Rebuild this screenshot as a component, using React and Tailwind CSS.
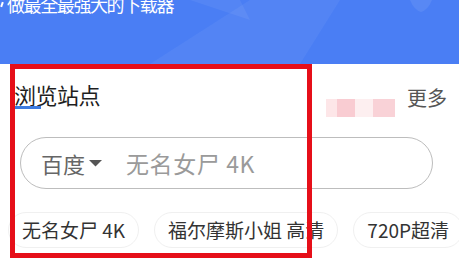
export default function App() {
  const font = { fontFamily: '"Noto Sans CJK SC", "Noto Sans", sans-serif' };
  return (
    <div className="relative w-[459px] h-[270px] overflow-hidden bg-white" style={font}>
      {/* header */}
      <div className="relative h-[64px] bg-[#4a7ef4] overflow-hidden">
        <svg className="absolute inset-0" width="459" height="64" viewBox="0 0 459 64">
          <polygon points="150,64 250,0 340,0 300,64" fill="#ffffff" opacity="0.05" />
          <polygon points="190,0 240,0 250,20" fill="#ffffff" opacity="0.06" />
          <path d="M410,0 L432,0 Q428,10 421,12 Q414,10 410,0 Z" fill="#ffffff" opacity="0.08" />
        </svg>
        <div className="absolute left-[1px] top-[2px] w-[2px] h-[5px] bg-white rotate-[20deg]" />
        <div className="relative -mt-[6px] pl-[7px] text-[18px] leading-[20px] text-white tracking-[-1.4px]">
          做最全最强大的下载器
        </div>
      </div>

      {/* title row */}
      <div className="relative h-[45px] pt-[17px] pl-[14px] pr-[12px]">
        <div className="flex flex-col">
          <div className="text-[22px] leading-[26px] text-[#1f1f1f] tracking-[-0.5px]">浏览站点</div>
          <div className="-mt-[1px] w-[27px] h-[3px] bg-[#3d7be0]" />
        </div>
        <div className="absolute right-[12px] top-[21px] flex items-start">
          <div className="mt-[14px] mr-[12px] flex">
            <div className="w-[11px] h-[18px] bg-[#fde6e8]" />
            <div className="w-[18px] h-[18px] bg-[#f9ccd2]" />
            <div className="w-[18px] h-[18px] bg-[#fdeff0]" />
            <div className="w-[22px] h-[18px] bg-[#f9d2d7]" />
          </div>
          <div className="text-[20px] leading-[26px] text-[#555555]">更多</div>
        </div>
      </div>

      {/* search */}
      <div className="ml-[20px] mr-[26px] mt-[28px] h-[52px] rounded-full border border-[#bdbdbd] flex items-center pl-[20px]">
        <span className="text-[22px] leading-[26px] text-[#666666]">百度</span>
        <svg className="ml-[4px] mt-[1px]" width="13" height="7" viewBox="0 0 13 7">
          <polygon points="0,0 13,0 6.5,6.5" fill="#555555" />
        </svg>
        <span className="ml-[24px] text-[23px] leading-[26px] text-[#9a9a9a] tracking-[0.6px]">无名女尸 4K</span>
      </div>

      {/* chips */}
      <div className="mt-[23px] pl-[8px] flex gap-[15px] whitespace-nowrap">
        {["无名女尸 4K", "福尔摩斯小姐 高清", "720P超清"].map((t) => (
          <div
            key={t}
            className="h-[36px] shrink-0 rounded-full border border-[#f0f0f0] px-[13px] flex items-center text-[19px] leading-[24px] text-[#333333]"
          >
            {t}
          </div>
        ))}
      </div>

      {/* red annotation box */}
      <div className="absolute left-[10px] top-[64px] w-[302px] h-[194px] border-[5px] border-[#e60f19]" />
    </div>
  );
}
